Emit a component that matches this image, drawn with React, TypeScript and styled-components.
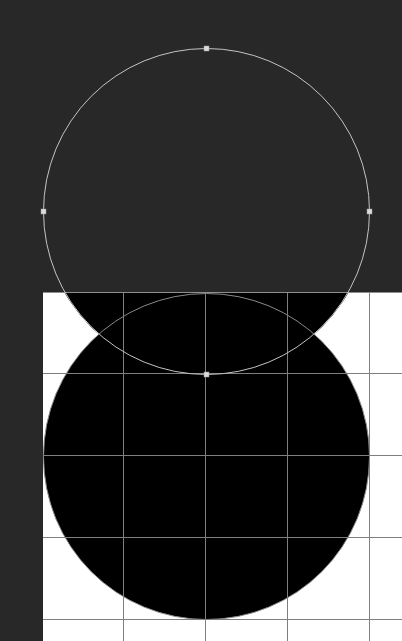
import React from 'react';
import styled, { createGlobalStyle } from 'styled-components';

const Global = createGlobalStyle`
  html, body { margin: 0; padding: 0; background: #282828; }
  body { font-family: "Liberation Sans", Arial, sans-serif; }
  #root { width: 402px; height: 641px; }
`;

const Stage = styled.div`
  position: relative;
  width: 402px;
  height: 641px;
  box-sizing: border-box;
  padding: 292px 0 0 43px;
  background: #282828;
  overflow: hidden;
`;

const Artboard = styled.div`
  position: relative;
  width: 100%;
  height: 100%;
  box-sizing: border-box;
  background: #ffffff;
  border-top: 1px solid #8e8e8e;
  overflow: hidden;
`;

const ShapeLayer = styled.svg`
  position: absolute;
  left: 0;
  top: 0;
  display: block;
`;

const GridOverlay = styled.div`
  position: absolute;
  inset: 0;
  pointer-events: none;
  background-image:
    linear-gradient(to right, #7f7f7f 1px, transparent 1px),
    linear-gradient(to bottom, #7f7f7f 1px, transparent 1px);
  background-size: 82px 82px;
  background-position: 80px 80px;
`;

const SelectionLayer = styled.svg`
  position: absolute;
  left: 0;
  top: 0;
  display: block;
  pointer-events: none;
`;

const handles: Array<[number, number]> = [
  [206.5, 48.5],
  [43.5, 211.5],
  [369.5, 211.5],
  [206.5, 374.5],
];

export default function App() {
  return (
    <>
      <Global />
      <Stage>
        <Artboard>
          <ShapeLayer width={359} height={348} viewBox="0 0 359 348">
            <circle cx={163.5} cy={-81.5} r={163.5} fill="#000" />
            <circle cx={163.5} cy={163.5} r={163} fill="#000" stroke="#8a8a8a" strokeWidth={1} />
          </ShapeLayer>
          <GridOverlay />
        </Artboard>
        <SelectionLayer width={402} height={641} viewBox="0 0 402 641">
          <circle cx={206.5} cy={211.5} r={163} fill="none" stroke="#c4c4c4" strokeWidth={1} />
          {handles.map(([x, y], i) => (
            <rect
              key={i}
              x={x - 2.5}
              y={y - 2.5}
              width={5}
              height={5}
              fill="#dcdcdc"
              stroke="#9a9a9a"
              strokeWidth={0.5}
            />
          ))}
        </SelectionLayer>
      </Stage>
    </>
  );
}
